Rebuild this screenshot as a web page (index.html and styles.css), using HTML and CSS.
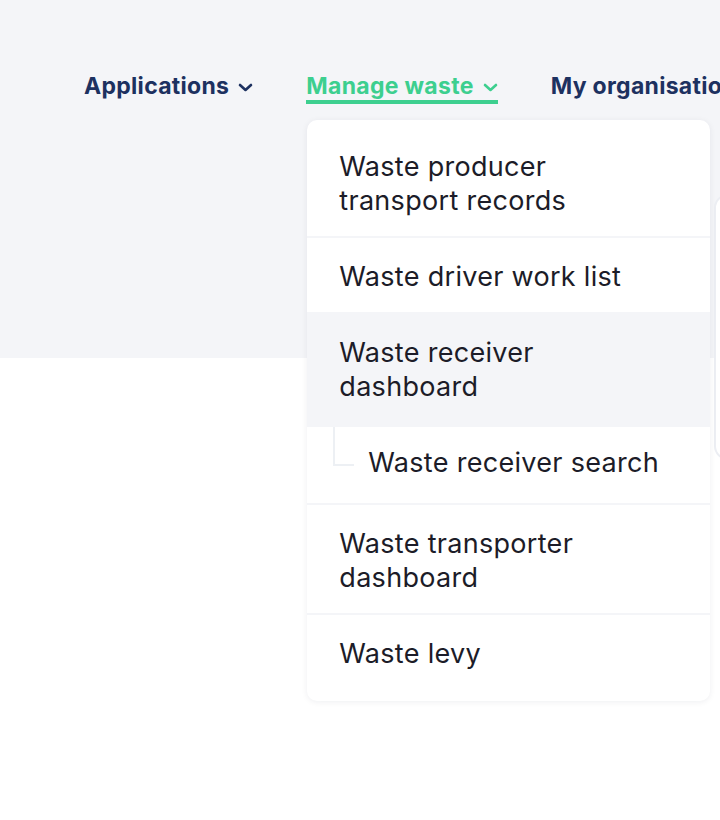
FILE: index.html
```html
<!DOCTYPE html>
<html lang="en">
<head>
    <meta charset="UTF-8">
    <meta name="viewport" content="width=device-width, initial-scale=1.0">
    <title>Manage waste</title>
    <link rel="stylesheet" href="styles.css">
</head>
<body>

    <header class="top">
        <nav class="nav">
            <div class="nav-item">
                <a href="#" class="nav-link">Applications
                    <svg class="chev" viewBox="0 0 15 9" width="15" height="9"><path d="M2 2l5.5 5 5.5-5" fill="none" stroke="currentColor" stroke-width="2.6" stroke-linecap="round" stroke-linejoin="round"/></svg>
                </a>
            </div>
            <div class="nav-item open">
                <a href="#" class="nav-link active">Manage waste
                    <svg class="chev" viewBox="0 0 15 9" width="15" height="9"><path d="M2 2l5.5 5 5.5-5" fill="none" stroke="currentColor" stroke-width="2.6" stroke-linecap="round" stroke-linejoin="round"/></svg>
                </a>

                <!-- ドロップダウン -->
                <ul class="dropdown">
                    <li class="dd-item"><a href="#">Waste producer<br>transport records</a></li>
                    <li class="dd-item"><a href="#">Waste driver work list</a></li>
                    <li class="dd-item current"><a href="#">Waste receiver<br>dashboard</a></li>
                    <li class="dd-item sub"><a href="#">Waste receiver search</a></li>
                    <li class="dd-item"><a href="#">Waste transporter<br>dashboard</a></li>
                    <li class="dd-item last"><a href="#">Waste levy</a></li>
                </ul>
            </div>
            <div class="nav-item">
                <a href="#" class="nav-link">My organisation
                    <svg class="chev" viewBox="0 0 15 9" width="15" height="9"><path d="M2 2l5.5 5 5.5-5" fill="none" stroke="currentColor" stroke-width="2.6" stroke-linecap="round" stroke-linejoin="round"/></svg>
                </a>
            </div>
        </nav>

        <div class="hero">
            <div class="card"></div>
        </div>
    </header>

</body>
</html>
```

FILE: styles.css
```css
html, body {
    overflow-x: clip;
}
body {
    margin: 0;
    min-height: 820px;
    background-color: #ffffff;
    font-family: 'Inter', 'Noto Sans', sans-serif;
    color: #1c1c28;
}
.top {
    background-color: #f4f5f8;
    height: 358px;
}

/* ナビゲーション */
.nav {
    display: flex;
    gap: 53px;
    padding: 72px 0 0 84px;
    white-space: nowrap;
}
.nav-item {
    position: relative;
}
.nav-link {
    display: flex;
    align-items: center;
    gap: 9px;
    font-size: 23px;
    line-height: 28px;
    font-weight: 700;
    letter-spacing: 0.3px;
    color: #1d3160;
    text-decoration: none;
    border-bottom: 4px solid transparent;
}
.nav-link.active {
    color: #3dcf8f;
    border-bottom-color: #3dcf8f;
}
.chev {
    margin-top: 3px;
}

/* ドロップダウン */
.dropdown {
    position: absolute;
    z-index: 10;
    top: 48px;
    left: 1px;
    width: 403px;
    margin: 0;
    padding: 8px 0 12px;
    list-style: none;
    background-color: #ffffff;
    border-radius: 10px;
    box-shadow: 0 1px 6px rgba(20, 30, 60, 0.07);
    white-space: normal;
}
.dd-item {
    border-bottom: 2px solid #f4f5f8;
}
.dd-item a {
    display: block;
    padding: 22px 32px 18px;
    font-size: 27px;
    line-height: 34px;
    letter-spacing: 0.3px;
    color: #1c1c28;
    text-decoration: none;
}
.dd-item.current {
    background-color: #f4f5f8;
    border-bottom: none;
}
.dd-item.current a {
    padding-bottom: 23px;
}
.dd-item.sub {
    position: relative;
}
.dd-item.sub a {
    padding: 19px 32px 23px 61px;
}
/* サブ項目のL字ライン */
.dd-item.sub::before {
    content: '';
    position: absolute;
    left: 26px;
    top: 0;
    width: 19px;
    height: 37px;
    border-left: 2px solid #edf0f4;
    border-bottom: 2px solid #edf0f4;
}
.dd-item.last {
    border-bottom: none;
}

/* 背景のカード */
.hero {
    padding: 90px 0 0 714px;
}
.card {
    width: 300px;
    height: 262px;
    background-color: #ffffff;
    border: 2px solid #eceef3;
    border-radius: 14px;
}
```
